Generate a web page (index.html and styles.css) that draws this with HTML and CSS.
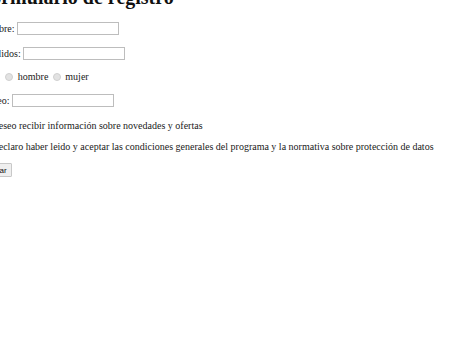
FILE: index.html
```html
<!DOCTYPE html>
<html lang="es">
<head>
<meta charset="utf-8">
<title>Formulario de registro</title>
<link rel="stylesheet" href="styles.css">
</head>
<body>
<div class="page">
  <h1 class="title">Formulario de registro</h1>
  <form class="form">
    <div class="row r1"><label>Nombre:</label><input class="field" type="text"></div>
    <div class="row r2"><label>Apellidos:</label><input class="field" type="text"></div>
    <div class="row r3"><span class="sexo">Sexo:</span><input class="radio" type="radio" name="sexo"><span>hombre</span><input class="radio" type="radio" name="sexo"><span>mujer</span></div>
    <div class="row r4"><label>Correo:</label><input class="field" type="text"></div>
    <div class="row r5"><input class="check" type="checkbox"><span>Deseo recibir información sobre novedades y ofertas</span></div>
    <div class="row r6"><input class="check" type="checkbox"><span>Declaro haber leido y aceptar las condiciones generales del programa y la normativa sobre protección de datos</span></div>
    <div class="row r7"><button class="btn" type="button">Enviar</button></div>
  </form>
</div>
</body>
</html>
```
FILE: styles.css
```css
html, body {
  margin: 0;
  padding: 0;
  background: #fff;
  overflow: hidden;
}
.page {
  margin-left: -21px;
  font-family: "Liberation Serif", "Times New Roman", serif;
  font-size: 10px;
  color: #1a1a1a;
  white-space: nowrap;
}
.title {
  margin: -13px 0 0 0;
  font-size: 20px;
  line-height: 20px;
  font-weight: bold;
  color: #111;
}
.form {
  display: flex;
  flex-direction: column;
  margin-top: 14px;
}
.row {
  display: flex;
  align-items: center;
  gap: 2.5px;
  height: 14px;
}
.r2 { margin-top: 11px; }
.r3 { margin-top: 9.5px; }
.r4 { margin-top: 10px; }
.r5 { margin-top: 11px; }
.r6 { margin-top: 7px; }
.r7 { margin-top: 9.5px; }
.sexo { margin-left: -2px; margin-right: 1px; }
.field {
  box-sizing: border-box;
  width: 102px;
  height: 13px;
  margin: 0;
  padding: 0;
  border: 1px solid #bdbdbd;
  background: #fff;
}
.radio, .check {
  appearance: none;
  -webkit-appearance: none;
  box-sizing: border-box;
  width: 8px;
  height: 8px;
  margin: 0 2px;
  border: 1px solid #d0d0d0;
  background: #e2e2e2;
}
.radio { border-radius: 50%; }
.check { margin: 0 1px 0 1px; border-radius: 1px; }
.btn {
  box-sizing: border-box;
  height: 14px;
  padding: 0 4px;
  margin: 0;
  font-family: "Liberation Sans", Arial, sans-serif;
  font-size: 8px;
  color: #111;
  background: #efefef;
  border: 1px solid #c8c8c8;
  border-radius: 1px;
}
```
